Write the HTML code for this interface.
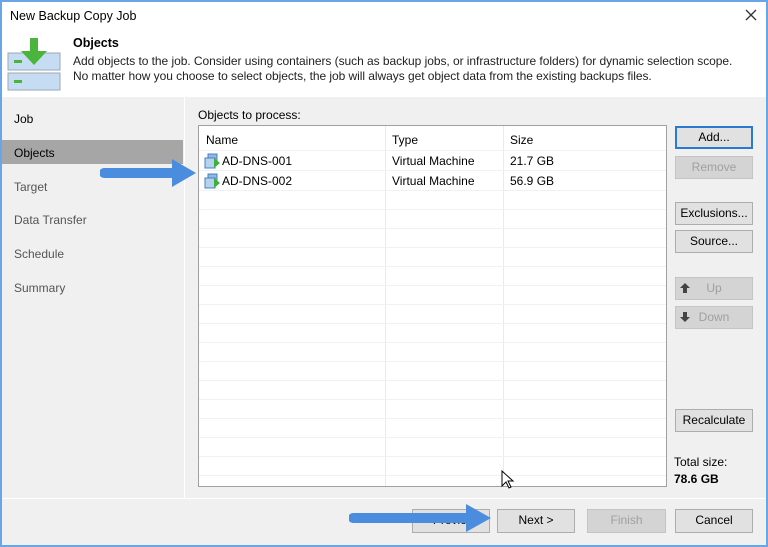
<!DOCTYPE html>
<html><head><meta charset="utf-8"><style>
*{box-sizing:border-box;margin:0;padding:0}
body{width:768px;height:547px;overflow:hidden;background:#f0f0f0;font-family:"Liberation Sans",sans-serif;font-size:12px;color:#000;position:relative}
.a{position:absolute}
.btn{position:absolute;background:#e1e1e1;border:1px solid #adadad;text-align:center;line-height:20px;font-size:12px;color:#000}
.dis{color:#a0a0a0;background:#d4d4d4;border-color:#c4c4c4}
.nav{position:absolute;left:14px;font-size:12px;color:#6d6d6d}
.hl{position:absolute;left:199px;width:467px;height:1px;background:#eef1f5}
.vl{position:absolute;top:126px;width:1px;height:360px;background:#e4ebf3}
</style></head><body>
<div class="a" style="left:0;top:0;width:768px;height:2px;background:#6aa6e6"></div>
<div class="a" style="left:0;top:0;width:2px;height:547px;background:#6aa6e6"></div>
<div class="a" style="left:766px;top:0;width:2px;height:547px;background:#6aa6e6"></div>
<div class="a" style="left:0;top:545px;width:768px;height:2px;background:#6aa6e6"></div>
<div class="a" style="left:2px;top:2px;width:764px;height:95px;background:#fff"></div>
<div class="a" style="left:10px;top:9px;font-size:12.5px">New Backup Copy Job</div>
<svg class="a" style="left:745px;top:9px" width="12" height="12"><path d="M1 1L11 11M11 1L1 11" stroke="#333" stroke-width="1.3"/></svg>
<svg class="a" style="left:6px;top:36px" width="56" height="56">
<rect x="2" y="17" width="52" height="17" fill="#c5dcf2" stroke="#9aa9b6"/>
<rect x="2" y="37" width="52" height="17" fill="#c5dcf2" stroke="#9aa9b6"/>
<rect x="8" y="24" width="8" height="3" fill="#4bb43c"/>
<rect x="8" y="44" width="8" height="3" fill="#4bb43c"/>
<path d="M24 2h8v13h9l-13 14l-13-14h9z" fill="#4bb43c"/>
</svg>
<div class="a" style="left:73px;top:36px;font-weight:bold;font-size:12.5px">Objects</div>
<div class="a" style="left:73px;top:54px;font-size:12px;line-height:15px;color:#222;letter-spacing:-0.05px">Add objects to the job. Consider using containers (such as backup jobs, or infrastructure folders) for dynamic selection scope.<br>No matter how you choose to select objects, the job will always get object data from the existing backups files.</div>
<div class="a" style="left:184px;top:97px;width:1px;height:401px;background:#fff"></div>
<div class="a" style="left:2px;top:498px;width:764px;height:1px;background:#fff"></div>
<div class="nav" style="top:112px;color:#000">Job</div>
<div class="a" style="left:2px;top:140px;width:181px;height:24px;background:#a6a6a6"></div>
<div class="nav" style="top:146px;color:#000">Objects</div>
<div class="nav" style="top:180px;color:#555">Target</div>
<div class="nav" style="top:213px;color:#555">Data Transfer</div>
<div class="nav" style="top:247px;color:#555">Schedule</div>
<div class="nav" style="top:281px;color:#555">Summary</div>
<div class="a" style="left:198px;top:108px">Objects to process:</div>
<div class="a" style="left:198px;top:125px;width:469px;height:362px;background:#fff;border:1px solid #a0a0a0"></div>
<div class="vl" style="left:385px"></div><div class="vl" style="left:503px"></div>
<div class="hl" style="top:150px"></div><div class="hl" style="top:170px"></div><div class="hl" style="top:190px"></div>
<div class="hl" style="top:209px"></div><div class="hl" style="top:228px"></div><div class="hl" style="top:247px"></div>
<div class="hl" style="top:266px"></div><div class="hl" style="top:285px"></div><div class="hl" style="top:304px"></div>
<div class="hl" style="top:323px"></div><div class="hl" style="top:342px"></div><div class="hl" style="top:361px"></div>
<div class="hl" style="top:380px"></div><div class="hl" style="top:399px"></div><div class="hl" style="top:418px"></div>
<div class="hl" style="top:437px"></div><div class="hl" style="top:456px"></div><div class="hl" style="top:475px"></div>
<div class="a" style="left:206px;top:133px">Name</div>
<div class="a" style="left:392px;top:133px">Type</div>
<div class="a" style="left:510px;top:133px">Size</div>
<svg class="a" style="left:204px;top:153px" width="18" height="16"><rect x="4" y="1" width="9" height="8" fill="#8fb8e3" stroke="#4a80bf"/><rect x="1" y="5" width="10" height="10" fill="#b5d2ef" stroke="#4a80bf"/><path d="M10 5l6 5l-6 5z" fill="#3bb33b"/></svg>
<svg class="a" style="left:204px;top:173px" width="18" height="16"><rect x="4" y="1" width="9" height="8" fill="#8fb8e3" stroke="#4a80bf"/><rect x="1" y="5" width="10" height="10" fill="#b5d2ef" stroke="#4a80bf"/><path d="M10 5l6 5l-6 5z" fill="#3bb33b"/></svg>
<div class="a" style="left:222px;top:154px">AD-DNS-001</div>
<div class="a" style="left:392px;top:154px">Virtual Machine</div>
<div class="a" style="left:510px;top:154px">21.7 GB</div>
<div class="a" style="left:222px;top:174px">AD-DNS-002</div>
<div class="a" style="left:392px;top:174px">Virtual Machine</div>
<div class="a" style="left:510px;top:174px">56.9 GB</div>
<div class="btn" style="left:675px;top:126px;width:78px;height:23px;border:2px solid #2a7ad4;line-height:19px">Add...</div>
<div class="btn dis" style="left:675px;top:156px;width:78px;height:23px">Remove</div>
<div class="btn" style="left:675px;top:202px;width:78px;height:23px">Exclusions...</div>
<div class="btn" style="left:675px;top:230px;width:78px;height:23px">Source...</div>
<div class="btn dis" style="left:675px;top:277px;width:78px;height:23px">Up</div>
<svg class="a" style="left:680px;top:283px" width="10" height="10"><path d="M5 0l5 5h-3v5h-4v-5h-3z" fill="#444"/></svg>
<div class="btn dis" style="left:675px;top:306px;width:78px;height:23px">Down</div>
<svg class="a" style="left:680px;top:312px" width="10" height="10"><path d="M5 10l5-5h-3v-5h-4v5h-3z" fill="#444"/></svg>
<div class="btn" style="left:675px;top:409px;width:78px;height:23px">Recalculate</div>
<div class="a" style="left:674px;top:455px">Total size:</div>
<div class="a" style="left:674px;top:472px;font-weight:bold">78.6 GB</div>
<div class="btn" style="left:412px;top:509px;width:78px;height:24px">&lt; Previous</div>
<div class="btn" style="left:497px;top:509px;width:78px;height:24px">Next &gt;</div>
<div class="btn dis" style="left:587px;top:509px;width:79px;height:24px">Finish</div>
<div class="btn" style="left:675px;top:509px;width:78px;height:24px">Cancel</div>
<svg class="a" style="left:100px;top:158px" width="98" height="30"><path d="M4 10h68v-9l24 14l-24 14v-9h-68a5 5 0 0 1 0-10z" fill="#4a8ddf"/></svg>
<svg class="a" style="left:349px;top:503px" width="146" height="30"><path d="M4 10h113v-9l25 14l-25 14v-9h-113a5 5 0 0 1 0-10z" fill="#4a8ddf"/></svg>
<svg class="a" style="left:501px;top:470px" width="14" height="20"><path d="M1 1v15l4-4l3 6l2-1l-3-6h5z" fill="#fff" stroke="#000" stroke-width="1"/></svg>
</body></html>
